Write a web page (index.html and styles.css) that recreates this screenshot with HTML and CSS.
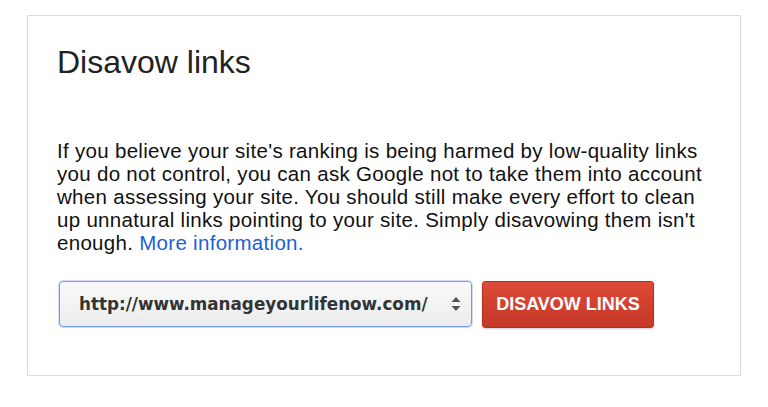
FILE: index.html
```html
<!DOCTYPE html>
<html lang="en">
<head>
  <meta charset="UTF-8">
  <meta name="viewport" content="width=device-width, initial-scale=1.0">
  <title>Disavow links</title>
  <link rel="stylesheet" href="styles.css">
</head>
<body>
  <div class="panel">
    <h1>Disavow links</h1>

    <p class="intro">
      If you believe your site's ranking is being harmed by low-quality links
      you do not control, you can ask Google not to take them into account
      when assessing your site. You should still make every effort to clean
      up unnatural links pointing to your site. Simply disavowing them isn't
      enough. <a href="#">More information.</a>
    </p>

    <!-- site picker + action -->
    <div class="actions">
      <div class="site-select">
        <span class="site-url">http://www.manageyourlifenow.com/</span>
        <svg class="arrows" width="10" height="16" viewBox="0 0 10 16">
          <path d="M5 1 L9.5 6 L0.5 6 Z" fill="#555"/>
          <path d="M5 15 L9.5 10 L0.5 10 Z" fill="#555"/>
        </svg>
      </div>
      <button class="btn-disavow">DISAVOW LINKS</button>
    </div>
  </div>
</body>
</html>
```

FILE: styles.css
```css
body {
  font-family: "Liberation Sans", Arial, sans-serif;
  background-color: #fff;
  color: #222;
  margin: 0;
  padding: 15px 0 0 27px;
}

.panel {
  box-sizing: border-box;
  width: 714px;
  background: #fff;
  border: 1px solid #dcdcdc;
  box-shadow: 0 1px 1px rgba(0,0,0,0.04);
  padding: 28px 20px 47px 29px;
}

h1 {
  margin: 0;
  font-size: 32px;
  line-height: 36px;
  font-weight: normal;
  color: #222;
}

.intro {
  width: 662px;
  margin: 59px 0 27px;
  font-size: 20.5px;
  letter-spacing: 0.3px;
  line-height: 23px;
  color: #111;
}

.intro a {
  color: #2160d4;
  text-decoration: none;
}

.actions {
  display: flex;
  gap: 10px;
  margin-left: 2px;
}

.site-select {
  box-sizing: border-box;
  width: 413px;
  height: 46px;
  display: flex;
  align-items: center;
  justify-content: space-between;
  padding: 0 10px 0 19px;
  border: 1px solid #6f9eef;
  border-radius: 4px;
  background: linear-gradient(#fafafa, #ececec);
  box-shadow: 0 0 0 1px rgba(111,158,239,0.35);
}

.site-url {
  font-family: "DejaVu Sans", Verdana, sans-serif;
  font-weight: bold;
  font-size: 16.8px;
  color: #333;
}

.arrows {
  display: block;
}

.btn-disavow {
  box-sizing: border-box;
  width: 172px;
  height: 47px;
  font-family: "Liberation Sans", Arial, sans-serif;
  font-size: 18px;
  font-weight: bold;
  color: #fff;
  background: linear-gradient(#dd4b39, #c53727);
  border: 1px solid #b52f20;
  border-radius: 3px;
  box-shadow: 0 1px 2px rgba(0,0,0,0.2);
  padding: 0;
  cursor: pointer;
}

.btn-disavow:hover {
  background: linear-gradient(#d14836, #b83323);
}
```
